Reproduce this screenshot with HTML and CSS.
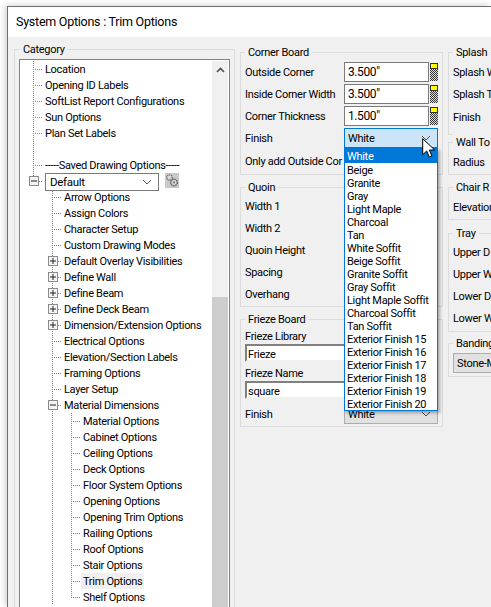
FILE: index.html
```html
<!DOCTYPE html>
<html lang="en">
<head>
<meta charset="utf-8">
<title>System Options : Trim Options</title>
<link rel="stylesheet" href="styles.css">
</head>
<body>
<div class="dialog">
  <div class="titlebar">System Options : Trim Options</div>
  <div class="content">
    <div class="group category">
      <div class="legend">Category</div>
      <div class="tree">
        <div class="rows">
          <div class="row"><span class="t"></span><span class="lbl">Location</span></div>
          <div class="row"><span class="t"></span><span class="lbl">Opening ID Labels</span></div>
          <div class="row"><span class="t"></span><span class="lbl">SoftList Report Configurations</span></div>
          <div class="row"><span class="t"></span><span class="lbl">Sun Options</span></div>
          <div class="row"><span class="t"></span><span class="lbl">Plan Set Labels</span></div>
          <div class="row"><span class="v"></span></div>
          <div class="row"><span class="t"></span><span class="lbl">-----Saved Drawing Options-----</span></div>
          <div class="row">
            <span class="l"><svg class="box" viewBox="0 0 10 10"><rect x=".5" y=".5" width="9" height="9" fill="#f4f4f4" stroke="#8a8a8a"/><path d="M2 5h6" stroke="#222"/></svg></span>
            <div class="select"><span>Default</span><svg class="chev" viewBox="0 0 10 6"><path d="M1 1l4 4 4-4" fill="none" stroke="#555"/></svg></div>
            <svg class="gear" viewBox="0 0 14 15"><rect width="14" height="15" fill="#c9c9c9"/><circle cx="4.500" cy="4.500" r="2.700" fill="#d8d8d8" stroke="#6a6a6a" stroke-width="1.300" stroke-dasharray="1.300 .7"/><circle cx="9" cy="9.500" r="3.300" fill="#d8d8d8" stroke="#5c5c5c" stroke-width="1.500" stroke-dasharray="1.500 .7"/><circle cx="9" cy="9.500" r="1" fill="#6a6a6a"/></svg>
          </div>
          <div class="row"><span class="e"></span><span class="t"></span><span class="lbl">Arrow Options</span></div>
          <div class="row"><span class="e"></span><span class="t"></span><span class="lbl">Assign Colors</span></div>
          <div class="row"><span class="e"></span><span class="t"></span><span class="lbl">Character Setup</span></div>
          <div class="row"><span class="e"></span><span class="t"></span><span class="lbl">Custom Drawing Modes</span></div>
          <div class="row"><span class="e"></span><span class="t"><svg class="box" viewBox="0 0 10 10"><rect x=".5" y=".5" width="9" height="9" fill="#f4f4f4" stroke="#8a8a8a"/><path d="M2 5h6M5 2v6" stroke="#222"/></svg></span><span class="lbl">Default Overlay Visibilities</span></div>
          <div class="row"><span class="e"></span><span class="t"><svg class="box" viewBox="0 0 10 10"><rect x=".5" y=".5" width="9" height="9" fill="#f4f4f4" stroke="#8a8a8a"/><path d="M2 5h6M5 2v6" stroke="#222"/></svg></span><span class="lbl">Define Wall</span></div>
          <div class="row"><span class="e"></span><span class="t"><svg class="box" viewBox="0 0 10 10"><rect x=".5" y=".5" width="9" height="9" fill="#f4f4f4" stroke="#8a8a8a"/><path d="M2 5h6M5 2v6" stroke="#222"/></svg></span><span class="lbl">Define Beam</span></div>
          <div class="row"><span class="e"></span><span class="t"><svg class="box" viewBox="0 0 10 10"><rect x=".5" y=".5" width="9" height="9" fill="#f4f4f4" stroke="#8a8a8a"/><path d="M2 5h6M5 2v6" stroke="#222"/></svg></span><span class="lbl">Define Deck Beam</span></div>
          <div class="row"><span class="e"></span><span class="t"><svg class="box" viewBox="0 0 10 10"><rect x=".5" y=".5" width="9" height="9" fill="#f4f4f4" stroke="#8a8a8a"/><path d="M2 5h6M5 2v6" stroke="#222"/></svg></span><span class="lbl">Dimension/Extension Options</span></div>
          <div class="row"><span class="e"></span><span class="t"></span><span class="lbl">Electrical Options</span></div>
          <div class="row"><span class="e"></span><span class="t"></span><span class="lbl">Elevation/Section Labels</span></div>
          <div class="row"><span class="e"></span><span class="t"></span><span class="lbl">Framing Options</span></div>
          <div class="row"><span class="e"></span><span class="t"></span><span class="lbl">Layer Setup</span></div>
          <div class="row"><span class="e"></span><span class="t"><svg class="box" viewBox="0 0 10 10"><rect x=".5" y=".5" width="9" height="9" fill="#f4f4f4" stroke="#8a8a8a"/><path d="M2 5h6" stroke="#222"/></svg></span><span class="lbl">Material Dimensions</span></div>
          <div class="row"><span class="e"></span><span class="v"></span><span class="t"></span><span class="lbl">Material Options</span></div>
          <div class="row"><span class="e"></span><span class="v"></span><span class="t"></span><span class="lbl">Cabinet Options</span></div>
          <div class="row"><span class="e"></span><span class="v"></span><span class="t"></span><span class="lbl">Ceiling Options</span></div>
          <div class="row"><span class="e"></span><span class="v"></span><span class="t"></span><span class="lbl">Deck Options</span></div>
          <div class="row"><span class="e"></span><span class="v"></span><span class="t"></span><span class="lbl">Floor System Options</span></div>
          <div class="row"><span class="e"></span><span class="v"></span><span class="t"></span><span class="lbl">Opening Options</span></div>
          <div class="row"><span class="e"></span><span class="v"></span><span class="t"></span><span class="lbl">Opening Trim Options</span></div>
          <div class="row"><span class="e"></span><span class="v"></span><span class="t"></span><span class="lbl">Railing Options</span></div>
          <div class="row"><span class="e"></span><span class="v"></span><span class="t"></span><span class="lbl">Roof Options</span></div>
          <div class="row"><span class="e"></span><span class="v"></span><span class="t"></span><span class="lbl">Stair Options</span></div>
          <div class="row"><span class="e"></span><span class="v"></span><span class="t"></span><span class="lbl selected">Trim Options</span></div>
          <div class="row"><span class="e"></span><span class="v"></span><span class="l"></span><span class="lbl">Shelf Options</span></div>
        </div>
        <div class="scrollbar">
          <div class="sb-up"><svg viewBox="0 0 9 6"><path d="M1 5l3.500-3.500L8 5" fill="none" stroke="#505050" stroke-width="1.600"/></svg></div>
          <div class="sb-thumb"></div>
        </div>
      </div>
    </div>

    <div class="col col1">
      <div class="group corner">
        <div class="legend">Corner Board</div>
        <div class="field first"><span>Outside Corner</span><div class="input">3.500"</div><div class="spin"><i></i><b></b></div></div>
        <div class="field"><span>Inside Corner Width</span><div class="input">3.500"</div><div class="spin"><i></i><b></b></div></div>
        <div class="field"><span>Corner Thickness</span><div class="input">1.500"</div><div class="spin"><i></i><b></b></div></div>
        <div class="field"><span>Finish</span>
          <div class="combo open">White<svg class="chev" viewBox="0 0 10 6"><path d="M1 1l4 4 4-4" fill="none" stroke="#555"/></svg>
            <ul class="dropdown">
              <li class="active">White</li><li>Beige</li><li>Granite</li><li>Gray</li><li>Light Maple</li><li>Charcoal</li><li>Tan</li><li>White Soffit</li><li>Beige Soffit</li><li>Granite Soffit</li><li>Gray Soffit</li><li>Light Maple Soffit</li><li>Charcoal Soffit</li><li>Tan Soffit</li><li>Exterior Finish 15</li><li>Exterior Finish 16</li><li>Exterior Finish 17</li><li>Exterior Finish 18</li><li>Exterior Finish 19</li><li>Exterior Finish 20</li>
            </ul>
            <svg class="cursor" viewBox="0 0 13 20"><path d="M.7.7v16l4-3.700 2.600 6 2.600-1.100-2.600-5.900h5.400z" fill="#fff" stroke="#000"/></svg>
          </div>
        </div>
        <div class="field first"><span>Only add Outside Cor</span></div>
      </div>
      <div class="group quoin">
        <div class="legend">Quoin</div>
        <div class="field"><span>Width 1</span></div>
        <div class="field"><span>Width 2</span></div>
        <div class="field"><span>Quoin Height</span></div>
        <div class="field"><span>Spacing</span></div>
        <div class="field"><span>Overhang</span></div>
      </div>
      <div class="group frieze">
        <div class="legend">Frieze Board</div>
        <div class="cap">Frieze Library</div>
        <div class="sunken">Frieze</div>
        <div class="cap second">Frieze Name</div>
        <div class="sunken">square</div>
        <div class="field finish"><span>Finish</span><div class="combo">White<svg class="chev" viewBox="0 0 10 6"><path d="M1 1l4 4 4-4" fill="none" stroke="#555"/></svg></div></div>
      </div>
    </div>

    <div class="col col2">
      <div class="group splash">
        <div class="legend">Splash</div>
        <div class="field first"><span>Splash W</span></div>
        <div class="field"><span>Splash T</span></div>
        <div class="field first"><span>Finish</span></div>
      </div>
      <div class="group wall">
        <div class="legend">Wall To</div>
        <div class="field first"><span>Radius</span></div>
      </div>
      <div class="group chair">
        <div class="legend">Chair R</div>
        <div class="field first"><span>Elevation</span></div>
      </div>
      <div class="group tray">
        <div class="legend">Tray</div>
        <div class="field"><span>Upper D</span></div>
        <div class="field"><span>Upper W</span></div>
        <div class="field"><span>Lower D</span></div>
        <div class="field"><span>Lower W</span></div>
      </div>
      <div class="group banding">
        <div class="legend">Banding</div>
        <div class="stone">Stone-M</div>
      </div>
    </div>
  </div>
</div>
</body>
</html>
```
FILE: styles.css
```css
* { box-sizing: border-box; }
html, body { margin: 0; height: 100%; overflow: hidden; background: #fff; }
body { font: 11px/18px Roboto, "Liberation Sans", sans-serif; letter-spacing: -.3px; color: #000; padding: 6px 0 0 7px; }
.dialog { width: 484px; height: 601px; border: 1px solid #6e6e6e; border-width: 1px 0 0 1px; background: #f0f0f0; box-shadow: -2px -1px 6px rgba(0,0,0,.18); overflow: hidden; display: flex; flex-direction: column; }
.titlebar { flex: none; height: 30px; background: #fff; padding: 7px 0 0 8px; font-size: 12.5px; letter-spacing: -.25px; line-height: 16px; white-space: nowrap; }
.content { display: flex; align-items: flex-start; gap: 5px; padding: 12px 0 0 6px; flex: 1; min-height: 0; }

.group { border: 1px solid #dcdcdc; }
.legend { width: fit-content; height: 16px; margin: -9px 0 0 0; padding: 0 3px; background: #f0f0f0; white-space: nowrap; }

.category { flex: none; width: 221px; height: 600px; padding: 0 0 0 4px; }
.category .legend { margin-left: 1px; }
.tree { width: 211px; height: 580px; margin-top: 2px; border: 1px solid #7f8389; background: #fff; display: flex; padding: 1px 1px 0 13px; }
.rows { flex: 1; min-width: 0; }
.row { display: flex; height: 16px; white-space: nowrap; }
.row > span { flex: none; height: 16px; }
.t, .l { width: 10px; display: flex; align-items: center; background-repeat: no-repeat; }
.e { width: 19px; }
.v { width: 19px; background: repeating-linear-gradient(to bottom, #808080 0 1px, transparent 1px 2px) 0 0 / 1px 100% no-repeat; }
.t { background-image: repeating-linear-gradient(to bottom, #808080 0 1px, transparent 1px 2px), repeating-linear-gradient(to right, #808080 0 1px, transparent 1px 2px); background-size: 1px 100%, 100% 1px; background-position: 0 0, 0 8px; }
.l { background-image: repeating-linear-gradient(to bottom, #808080 0 1px, transparent 1px 2px), repeating-linear-gradient(to right, #808080 0 1px, transparent 1px 2px); background-size: 1px 9px, 100% 1px; background-position: 0 0, 0 8px; }
.lbl { padding: 0 2px; }
.lbl.selected { background: #f0f0f0; }
.box { flex: none; width: 10px; height: 10px; margin-left: -4px; }
.select { flex: none; position: relative; z-index: 1; width: 114px; height: 18px; margin-left: 2px; border: 1px solid #7a7a7a; background: #fff; display: flex; align-items: center; justify-content: space-between; padding: 0 6px 0 4px; font-size: 11.5px; }
.chev { flex: none; width: 10px; height: 6px; }
.gear { flex: none; width: 14px; height: 15px; margin: 0 0 0 6px; }

.scrollbar { flex: none; width: 16px; height: 100%; background: #f0f0f0; display: flex; flex-direction: column; }
.sb-up { flex: none; height: 17px; display: flex; align-items: center; justify-content: center; }
.sb-up svg { width: 9px; height: 6px; }
.sb-thumb { flex: 1; margin-top: 219px; background: #cdcdcd; }

.col { flex: none; margin-top: 3px; }
.col1 { width: 203px; }
.col2 { width: 43px; }
.col2 .group { width: 100px; }
.col1 .group, .col2 .group { padding-left: 4px; padding-right: 4px; }
.corner { padding-bottom: 2px; }
.quoin { margin-top: 12px; padding-bottom: 1px; }
.frieze { margin-top: 12px; padding-bottom: 1px; }
.splash { padding-bottom: 6px; }
.wall { margin-top: 7px; padding-bottom: 1px; }
.chair { margin-top: 12px; padding-bottom: 1px; }
.tray { margin-top: 13px; padding-bottom: 2px; }
.banding { margin-top: 11px; padding-bottom: 3px; }
.field { display: flex; align-items: center; height: 22px; white-space: nowrap; }
.field > span { flex: none; width: 99px; padding-top: 2px; }
.field.first { margin-top: 1px; }
.input { flex: none; width: 85px; height: 20px; border: 1px solid #7a7a7a; background: #fff; padding-left: 3px; line-height: 18px; font-size: 12px; letter-spacing: -.4px; }
.spin { flex: none; width: 8px; height: 18px; margin-left: 1px; display: flex; flex-direction: column; }
.spin i { display: block; flex: none; height: 6px; background: #ffff00; border: 1px solid #333; }
.spin b { display: block; flex: 1; background: #c8c8c8 repeating-conic-gradient(#333 0 25%, #dedede 0 50%) 0 0 / 2px 2px; }

.combo { flex: none; position: relative; width: 94px; height: 20px; border: 1px solid #adadad; background: #e1e1e1; display: flex; align-items: center; justify-content: space-between; padding: 2px 6px 0 3px; }
.combo > .chev { margin-top: -2px; }
.combo.open { background: #cce4f7; border-color: #0078d7; }
.dropdown { position: absolute; z-index: 3; top: 19px; left: -1px; width: 94px; margin: 0; padding: 0; list-style: none; background: #fff; border: 1px solid #0078d7; box-shadow: 2px 2px 3px rgba(0,0,0,.3); }
.dropdown li { height: 13px; line-height: 15px; padding-left: 2px; white-space: nowrap; }
.dropdown li.active { height: 14px; background: #0078d7; color: #fff; }
.cursor { position: absolute; z-index: 4; left: 77px; top: 9px; width: 13px; height: 20px; }

.cap { margin-top: 1px; height: 16px; }
.cap.second { margin-top: 3px; }
.sunken { width: 190px; height: 18px; background: #fff; border: 2px solid #8a8a8a; border-color: #808080 #f0f0f0 #f0f0f0 #808080; padding-left: 1px; line-height: 17px; }
.finish { margin-top: 4px; }
.stone { width: 80px; height: 20px; margin-top: 2px; border: 1px solid #adadad; background: #e1e1e1; padding-left: 3px; line-height: 20px; white-space: nowrap; }
```
